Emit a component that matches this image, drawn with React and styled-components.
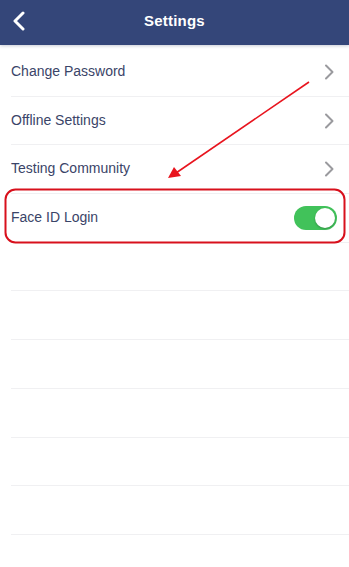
import React, { useState } from "react";
import styled, { createGlobalStyle } from "styled-components";

const GlobalStyle = createGlobalStyle`
  html, body {
    margin: 0;
    padding: 0;
    background: #ffffff;
    font-family: "Liberation Sans", Arial, sans-serif;
  }
`;

const Screen = styled.div`
  position: relative;
  width: 349px;
  height: 567px;
  overflow: hidden;
  background: #ffffff;
`;

const Header = styled.div`
  position: relative;
  z-index: 1;
  height: 45px;
  display: flex;
  align-items: center;
  justify-content: center;
  background: #344679;
  box-shadow: 0 1px 3px rgba(40, 50, 90, 0.25);
`;

const BackButton = styled.button`
  position: absolute;
  left: 8px;
  top: 9px;
  width: 22px;
  height: 24px;
  padding: 0;
  border: none;
  background: none;
  display: flex;
  align-items: center;
  justify-content: center;
`;

const Title = styled.h1`
  margin: 0;
  color: #ffffff;
  font-size: 15px;
  font-weight: bold;
  letter-spacing: 0.2px;
  transform: translateY(-2px);
`;

const List = styled.div`
  padding-top: 3px;
  padding-left: 11px;
`;

const Row = styled.div`
  box-sizing: border-box;
  height: 48.7px;
  display: flex;
  align-items: center;
  justify-content: space-between;
  padding-right: 14px;
  border-bottom: 1px solid #f0f0f2;
`;

const Label = styled.span`
  color: #3a4468;
  font-size: 14px;
  transform: translateY(-1px);
`;

const Toggle = styled.button`
  position: relative;
  width: 43px;
  height: 24px;
  margin-right: -2px;
  padding: 0;
  border: none;
  border-radius: 12px;
  background: ${(props) => (props.on ? "#41c25a" : "#e5e5ea")};
  cursor: pointer;
`;

const Knob = styled.span`
  position: absolute;
  top: 2px;
  left: ${(props) => (props.on ? "21px" : "2px")};
  width: 20px;
  height: 20px;
  border-radius: 50%;
  background: #ffffff;
  box-shadow: 0 1px 2px rgba(0, 0, 0, 0.25);
`;

const Annotation = styled.svg`
  position: absolute;
  left: 0;
  top: 0;
  pointer-events: none;
`;

const Chevron = () => (
  <svg width="12" height="16" viewBox="0 0 12 16">
    <path d="M3 1.5 L9.5 8 L3 14.5" fill="none" stroke="#9a9a9e" strokeWidth="2" strokeLinecap="round" strokeLinejoin="round" />
  </svg>
);

const items = ["Change Password", "Offline Settings", "Testing Community"];

function App() {
  const [faceId, setFaceId] = useState(true);
  return (
    <Screen>
      <GlobalStyle />
      <Header>
        <BackButton>
          <svg width="14" height="20" viewBox="0 0 14 20">
            <path d="M11 2 L3 10 L11 18" fill="none" stroke="#ffffff" strokeWidth="3" strokeLinecap="round" strokeLinejoin="round" />
          </svg>
        </BackButton>
        <Title>Settings</Title>
      </Header>
      <List>
        {items.map((item) => (
          <Row key={item}>
            <Label>{item}</Label>
            <Chevron />
          </Row>
        ))}
        <Row>
          <Label>Face ID Login</Label>
          <Toggle on={faceId ? 1 : 0} onClick={() => setFaceId(!faceId)}>
            <Knob on={faceId ? 1 : 0} />
          </Toggle>
        </Row>
        {[0, 1, 2, 3, 4, 5].map((i) => (
          <Row key={i} />
        ))}
      </List>
      <Annotation width="349" height="567" viewBox="0 0 349 567">
        <line x1="309" y1="82" x2="176" y2="173" stroke="#e8141e" strokeWidth="1.6" />
        <polygon points="168,178 174,167 181,176" fill="#e8141e" />
        <rect x="5.5" y="189.5" width="339" height="53" rx="10" fill="none" stroke="#d8101c" strokeWidth="2" />
      </Annotation>
    </Screen>
  );
}

export default App;
